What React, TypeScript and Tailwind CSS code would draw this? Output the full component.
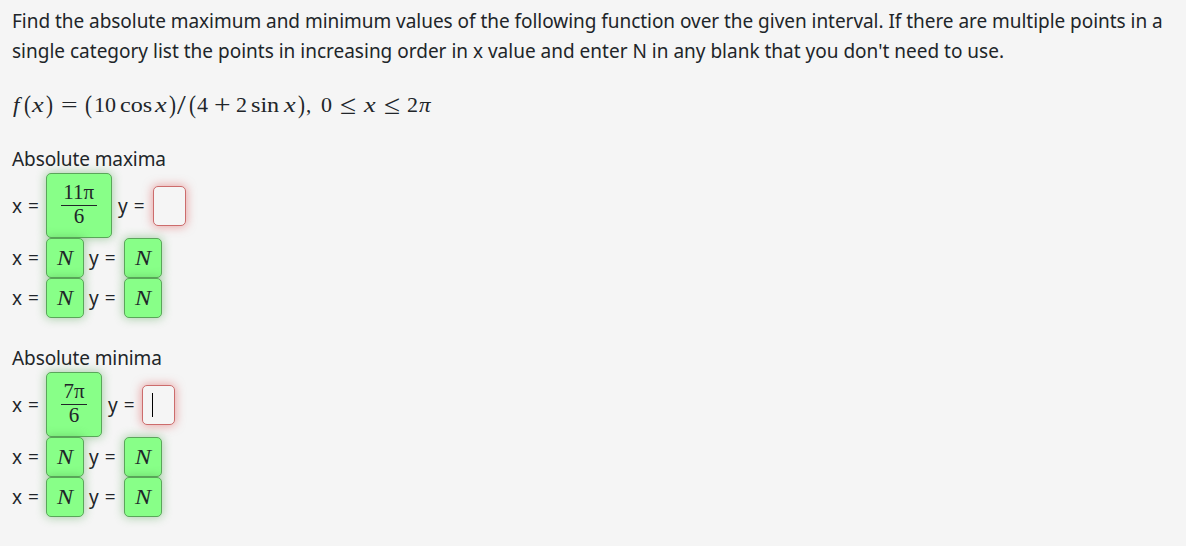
import clsx from "clsx";
import type { ReactNode } from "react";

type Token = {
  text: string;
  width: string;
  style?: string;
};

const formula: Token[] = [
  { text: "f", width: "w-[12px]", style: "italic pl-[1px] scale-x-110" },
  { text: "(", width: "w-[8px]", style: "scale-y-120" },
  { text: "x", width: "w-[14px]", style: "italic scale-x-125" },
  { text: ")", width: "w-[15px]", style: "scale-y-120" },
  { text: "=", width: "w-[24px]", style: "scale-x-140" },
  { text: "(", width: "w-[9px]", style: "scale-y-120" },
  { text: "10", width: "w-[26px]", style: "scale-x-105" },
  { text: "cos", width: "w-[35px]", style: "scale-x-115" },
  { text: "x", width: "w-[14px]", style: "italic scale-x-125" },
  { text: ")", width: "w-[8px]", style: "scale-y-120" },
  { text: "/", width: "w-[12px]", style: "scale-x-150 scale-y-125" },
  { text: "(", width: "w-[8px]", style: "scale-y-120" },
  { text: "4", width: "w-[17px]", style: "scale-x-105" },
  { text: "+", width: "w-[22px]", style: "scale-x-140 scale-y-125" },
  { text: "2", width: "w-[15px]", style: "scale-x-105" },
  { text: "sin", width: "w-[33px]", style: "scale-x-115" },
  { text: "x", width: "w-[14px]", style: "italic scale-x-125" },
  { text: ")", width: "w-[8px]", style: "scale-y-120" },
  { text: ",", width: "w-[15px]" },
  { text: "0", width: "w-[19px]", style: "scale-x-105" },
  { text: "≤", width: "w-[24px]", style: "scale-x-140 scale-y-130" },
  { text: "x", width: "w-[20px]", style: "italic scale-x-125" },
  { text: "≤", width: "w-[23px]", style: "scale-x-140 scale-y-130" },
  { text: "2", width: "w-[12px]", style: "scale-x-105" },
  { text: "π", width: "w-[13px]", style: "italic scale-x-110" },
];

const Formula = () => (
  <p className="mt-[24px] flex h-[30px] items-center whitespace-pre font-['Liberation_Serif',serif] text-[21px] leading-[30px]">
    {formula.map((token, i) => (
      <span key={i} className={clsx("shrink-0", token.width)}>
        <span className={clsx("inline-block origin-left", token.style)}>{token.text}</span>
      </span>
    ))}
  </p>
);

type BoxProps = {
  size: string;
  wrong?: boolean;
  children?: ReactNode;
};

const Box = ({ size, wrong, children }: BoxProps) => (
  <span
    className={clsx(
      "flex shrink-0 items-center justify-center rounded-[5px] border font-['Liberation_Serif',serif] text-[21px]",
      wrong
        ? "border-[#cc6c6c] bg-[#f5f5f5] shadow-[0_0_10px_1px_rgba(221,85,85,0.5)]"
        : "border-[#5aa65a] bg-[#88ff88] shadow-[0_0_10px_1px_rgba(80,165,80,0.45)]",
      size
    )}
  >
    {children}
  </span>
);

const Label = ({ name, width }: { name: string; width: string }) => (
  <span className={clsx("shrink-0 whitespace-pre [word-spacing:1px]", width)}>{name} =</span>
);

const Fraction = ({ top, width }: { top: string; width: string }) => (
  <span className={clsx("flex flex-col items-center text-[20px] leading-[20px]", width)}>
    <span className="h-[22px] scale-x-105 leading-[18px]">{top}</span>
    <span className="h-px w-full bg-[#212529]" />
    <span className="h-[23px] scale-x-105">6</span>
  </span>
);

const EmptyRow = () => (
  <div className="flex h-10 items-center">
    <Label name="x" width="w-[34px]" />
    <Box size="h-10 w-[38px]">
      <i className="inline-block scale-x-115">N</i>
    </Box>
    <span className="w-[5px]" />
    <Label name="y" width="w-[35px]" />
    <Box size="h-10 w-[38px]">
      <i className="inline-block scale-x-115">N</i>
    </Box>
  </div>
);

type AnswersProps = {
  title: string;
  top: string;
  boxSize: string;
  fractionWidth: string;
  focused?: boolean;
};

const Answers = ({ title, top, boxSize, fractionWidth, focused }: AnswersProps) => (
  <section>
    <p className="h-[29px] tracking-[-0.1px]">{title}</p>
    <div className="flex h-[65px] items-center">
      <Label name="x" width="w-[34px]" />
      <Box size={boxSize}>
        <Fraction top={top} width={fractionWidth} />
      </Box>
      <span className="w-[6px]" />
      <Label name="y" width={focused ? "w-[34px]" : "w-[35px]"} />
      <Box size="h-10 w-[33px]" wrong>
        {focused && <span className="mr-[12px] h-6 w-px bg-black" />}
      </Box>
    </div>
    <EmptyRow />
    <EmptyRow />
  </section>
);

export default function App() {
  return (
    <main className="h-[546px] overflow-hidden bg-[#f5f5f5] pl-3 pt-[6px] font-['Noto_Sans',sans-serif] text-[19px] leading-[30px] text-[#212529]">
      <p className="whitespace-nowrap">
        <span className="block tracking-[-0.04px]">
          Find the absolute maximum and minimum values of the following function over the given interval. If there are multiple points in a
        </span>
        <span className="block">
          single category list the points in increasing order in x value and enter N in any blank that you don't need to use.
        </span>
      </p>
      <Formula />
      <div className="mt-[24px] flex flex-col gap-[25px]">
        <Answers title="Absolute maxima" top="11π" boxSize="h-[65px] w-[66px]" fractionWidth="w-[36px]" />
        <Answers title="Absolute minima" top="7π" boxSize="h-[65px] w-[56px]" fractionWidth="w-[26px]" focused />
      </div>
    </main>
  );
}
